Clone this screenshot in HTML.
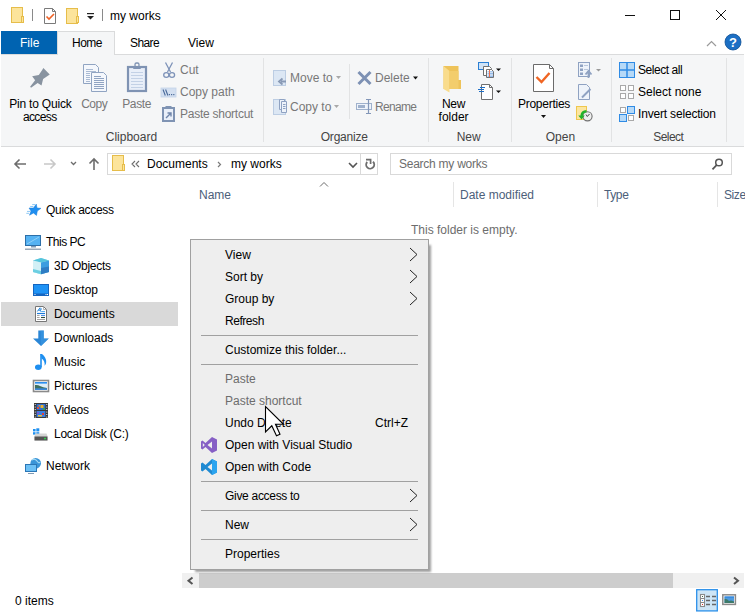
<!DOCTYPE html>
<html><head><meta charset="utf-8">
<style>
html,body{margin:0;padding:0;}
body{width:745px;height:613px;position:relative;overflow:hidden;background:#fff;font-family:"Liberation Sans",sans-serif;font-size:12px;color:#000;}
.a{position:absolute;}
.t{position:absolute;white-space:nowrap;line-height:14px;font-size:12px;}
.g{color:#787878;}
.r{position:absolute;}
svg{position:absolute;overflow:visible;}
</style></head><body>

<!-- ===== Title bar ===== -->
<div class="t" style="left:110px;top:9px;color:#000;">my works</div>

<!-- ===== Ribbon tabs ===== -->
<div class="r" style="left:1px;top:54px;width:743px;height:92px;background:#f5f6f7;border-top:1px solid #dadbdc;border-bottom:1px solid #dadbdc;box-sizing:border-box;height:93px;"></div>
<div class="r" style="left:1px;top:31px;width:56px;height:23px;background:#0063b1;"></div>
<div class="r" style="left:57px;top:31px;width:58px;height:24px;background:#f5f6f7;border:1px solid #dadbdc;border-bottom:none;box-sizing:border-box;"></div>
<div class="t" style="left:20px;top:36px;color:#fff;">File</div>
<div class="t" style="left:72px;top:36px;color:#000;letter-spacing:-0.5px;">Home</div>
<div class="t" style="left:130px;top:36px;color:#000;letter-spacing:-0.6px;">Share</div>
<div class="t" style="left:188px;top:36px;color:#000;">View</div>

<!-- ===== Ribbon content text ===== -->
<div class="t" style="left:-59.65px;top:97px;width:200px;text-align:center;letter-spacing:-0.2px;">Pin to Quick</div>
<div class="t" style="left:-60.25px;top:110px;width:200px;text-align:center;letter-spacing:-0.6px;">access</div>
<div class="t" style="left:-5.849999999999994px;top:97px;width:200px;text-align:center;letter-spacing:-0.5px;color:#787878;">Copy</div>
<div class="t" style="left:36.599999999999994px;top:97px;width:200px;text-align:center;letter-spacing:-0.4px;color:#787878;">Paste</div>
<div class="t g" style="left:180px;top:63px;">Cut</div>
<div class="t g" style="left:180px;top:85px;">Copy path</div>
<div class="t g" style="left:180px;top:107px;letter-spacing:-0.25px;">Paste shortcut</div>
<div class="t" style="left:31.44999999999999px;top:130px;width:200px;text-align:center;color:#444;">Clipboard</div>

<div class="t g" style="left:290px;top:71px;">Move to</div>
<div class="t g" style="left:290px;top:100px;">Copy to</div>
<div class="t g" style="left:375px;top:71px;">Delete</div>
<div class="t g" style="left:375px;top:100px;letter-spacing:-0.7px;">Rename</div>
<div class="t" style="left:244.25px;top:130px;width:200px;text-align:center;color:#444;letter-spacing:-0.2px;">Organize</div>

<div class="t" style="left:353.55px;top:97px;width:200px;text-align:center;letter-spacing:-0.3px;">New</div>
<div class="t" style="left:353.6px;top:110px;width:200px;text-align:center;">folder</div>
<div class="t" style="left:368.7px;top:130px;width:200px;text-align:center;color:#444;">New</div>

<div class="t" style="left:444px;top:97px;width:200px;text-align:center;letter-spacing:-0.25px;">Properties</div>
<div class="t" style="left:460.4px;top:130px;width:200px;text-align:center;color:#444;">Open</div>

<div class="t" style="left:638px;top:63px;letter-spacing:-0.45px;">Select all</div>
<div class="t" style="left:638px;top:85px;">Select none</div>
<div class="t" style="left:638px;top:107px;letter-spacing:-0.18px;">Invert selection</div>
<div class="t" style="left:568.25px;top:130px;width:200px;text-align:center;color:#444;letter-spacing:-0.6px;">Select</div>

<!-- group separators -->
<div class="r" style="left:263px;top:58px;width:1px;height:84px;background:#e2e3e4;"></div>
<div class="r" style="left:349px;top:64px;width:1px;height:55px;background:#e2e3e4;"></div>
<div class="r" style="left:428px;top:58px;width:1px;height:84px;background:#e2e3e4;"></div>
<div class="r" style="left:511px;top:58px;width:1px;height:84px;background:#e2e3e4;"></div>
<div class="r" style="left:611px;top:58px;width:1px;height:84px;background:#e2e3e4;"></div>
<div class="r" style="left:726px;top:58px;width:1px;height:84px;background:#e2e3e4;"></div>

<!-- ===== Address bar ===== -->
<div class="r" style="left:107px;top:153px;width:271px;height:22px;border:1px solid #d9d9d9;box-sizing:border-box;"></div>
<div class="r" style="left:360px;top:153px;width:1px;height:22px;background:#d9d9d9;"></div>
<div class="t" style="left:147px;top:157px;">Documents</div>
<div class="t" style="left:231px;top:157px;">my works</div>
<div class="r" style="left:390px;top:153px;width:342px;height:22px;border:1px solid #d9d9d9;box-sizing:border-box;"></div>
<div class="t" style="left:399px;top:157px;color:#6d6d6d;letter-spacing:-0.25px;">Search my works</div>

<!-- ===== Column headers ===== -->
<div class="t" style="left:199px;top:188px;color:#4c607a;">Name</div>
<div class="r" style="left:453px;top:182px;width:1px;height:25px;background:#e5e5e5;"></div>
<div class="t" style="left:460px;top:188px;color:#4c607a;">Date modified</div>
<div class="r" style="left:597px;top:182px;width:1px;height:25px;background:#e5e5e5;"></div>
<div class="t" style="left:604px;top:188px;color:#4c607a;letter-spacing:-0.4px;">Type</div>
<div class="r" style="left:717px;top:182px;width:1px;height:25px;background:#e5e5e5;"></div>
<div class="t" style="left:724px;top:188px;color:#4c607a;letter-spacing:-0.4px;">Size</div>

<div class="t" style="left:411px;top:223px;color:#6d6d6d;">This folder is empty.</div>

<!-- ===== Nav pane ===== -->
<div class="r" style="left:1px;top:302px;width:177px;height:24px;background:#d9d9d9;"></div>
<div class="t" style="left:46px;top:203px;letter-spacing:-0.3px;">Quick access</div>
<div class="t" style="left:46px;top:235px;letter-spacing:-0.5px;">This PC</div>
<div class="t" style="left:54px;top:259px;letter-spacing:-0.25px;">3D Objects</div>
<div class="t" style="left:54px;top:283px;">Desktop</div>
<div class="t" style="left:54px;top:307px;">Documents</div>
<div class="t" style="left:54px;top:331px;">Downloads</div>
<div class="t" style="left:54px;top:355px;">Music</div>
<div class="t" style="left:54px;top:379px;">Pictures</div>
<div class="t" style="left:54px;top:403px;letter-spacing:-0.3px;">Videos</div>
<div class="t" style="left:54px;top:427px;letter-spacing:-0.28px;">Local Disk (C:)</div>
<div class="t" style="left:46px;top:459px;">Network</div>

<!-- ===== Scrollbar ===== -->
<div class="r" style="left:182px;top:573px;width:562px;height:15px;background:#f0f0f0;"></div>
<div class="r" style="left:199px;top:573px;width:474px;height:15px;background:#cdcdcd;"></div>

<!-- ===== Status bar ===== -->
<div class="t" style="left:15px;top:594px;">0 items</div>


<!-- ===== ICONS (background) ===== -->
<svg style="left:0;top:0" width="745" height="613" viewBox="0 0 745 613">
<!-- title bar -->
<g>
  <rect x="11.5" y="7.5" width="11" height="15" fill="#fce49b" stroke="#e6bd4a"/>
  <rect x="21.5" y="16.5" width="2" height="6" fill="#fce49b" stroke="#e6bd4a"/>
  <rect x="32" y="9" width="1" height="12" fill="#8a8a8a"/>
  <path d="M44.5 8.5 H52.5 L55.5 11.5 V23.5 H44.5 Z" fill="#fff" stroke="#7a7a7a"/>
  <path d="M52.5 8.5 V11.5 H55.5" fill="none" stroke="#7a7a7a"/>
  <path d="M46.5 16.5 L49 19 L54 14" fill="none" stroke="#ef6226" stroke-width="1.6"/>
  <rect x="66.5" y="8.5" width="11" height="15" fill="#fce49b" stroke="#e6bd4a"/>
  <rect x="76.5" y="16.5" width="2" height="6" fill="#fce49b" stroke="#e6bd4a"/>
  <rect x="87" y="13" width="7" height="1.2" fill="#222"/>
  <path d="M87 16 H94 L90.5 19.5 Z" fill="#222"/>
  <rect x="102" y="9" width="1" height="12" fill="#8a8a8a"/>
</g>
<!-- window controls -->
<g fill="none" stroke="#111" stroke-width="1">
  <path d="M625 15.5 H635"/>
  <rect x="670.5" y="10.5" width="9" height="9"/>
  <path d="M716 10 L726 20 M726 10 L716 20"/>
</g>
<!-- collapse + help -->
<path d="M707 46 L711.5 41.5 L716 46" fill="none" stroke="#9a9a9a" stroke-width="1.2"/>
<circle cx="733" cy="42" r="8" fill="#1c6fc4" stroke="#0d4f94" stroke-width="0.8"/>
<text x="733" y="47" font-family="Liberation Sans" font-weight="bold" font-size="13" fill="#fff" text-anchor="middle">?</text>

<!-- ribbon: pin -->
<polygon points="43.35,68.11 49.74,74.5 47.92,75.64 43.12,79.07 41.52,85.46 37.64,82.95 31.02,87.74 30.11,86.83 35.13,80.21 32.16,76.33 38.79,74.96 42.21,69.94" fill="#8893a0"/>
<!-- copy -->
<g stroke="#90a4c2" fill="#f4f7fc" stroke-width="1">
  <path d="M83.5 64.5 H95.5 L98.5 67.5 V83.5 H83.5 Z"/>
  <path d="M91.5 72.5 H103.5 L106.5 75.5 V91.5 H91.5 Z"/>
</g>
<g stroke="#a9bad3" stroke-width="1">
  <path d="M86 69.5 H93 M86 71.5 H96 M86 73.5 H90 M86 75.5 H90 M86 77.5 H90 M86 79.5 H90 M86 81.5 H90"/>
  <path d="M94 76.5 H101 M94 78.5 H104 M94 80.5 H104 M94 82.5 H104 M94 84.5 H104 M94 86.5 H104 M94 88.5 H104" stroke="#8fa3c2"/>
</g>
<!-- paste -->
<rect x="128" y="67" width="18" height="24" fill="#e9eff9" stroke="#7f93b3" stroke-width="2.2"/>
<g stroke="#c3d1e6" stroke-width="1"><path d="M131 72.5 H143 M131 75.5 H143 M131 78.5 H143 M131 81.5 H143 M131 84.5 H143 M131 87.5 H143"/></g>
<path d="M132 66 H142 L140.5 69 H133.5 Z" fill="#7f93b3"/>
<rect x="135" y="63" width="4" height="4" rx="1.5" fill="none" stroke="#7f93b3" stroke-width="1.3"/>
<!-- cut -->
<g fill="none" stroke="#7d92b8" stroke-width="1.3">
  <path d="M165.5 62.5 L170.5 72 M172.5 62.5 L167.5 72"/>
  <ellipse cx="166.3" cy="75" rx="2.6" ry="2.4"/>
  <ellipse cx="172" cy="75" rx="2.6" ry="2.4"/>
</g>
<!-- copy path -->
<rect x="161" y="88" width="15" height="9" fill="#d3dff0" stroke="#c4d3e8" stroke-width="0.8"/>
<path d="M163 89.5 L165.3 95.5 M165.6 89.5 L167.9 95.5" stroke="#4a6a9a" stroke-width="1.1"/>
<g fill="#4a6a9a"><rect x="168.8" y="94" width="1.2" height="1.2"/><rect x="171" y="94" width="1.2" height="1.2"/><rect x="173.2" y="94" width="1.2" height="1.2"/></g>
<!-- paste shortcut -->
<rect x="163" y="108" width="11" height="13" fill="#e9eff9" stroke="#7f93b3" stroke-width="2"/>
<rect x="165.5" y="106" width="6" height="2" fill="#7f93b3"/>
<path d="M166 118 L170.5 113.5 M167.5 113 H171 V116.5" fill="none" stroke="#6f85aa" stroke-width="1.4"/>

<!-- move to -->
<rect x="273.5" y="70.5" width="12" height="15" fill="#dce7f4" stroke="#bccde3"/>
<path d="M286 81.5 H281 M282.5 78.5 L279 81.5 L282.5 84.5" fill="none" stroke="#8899b5" stroke-width="1.8"/>
<!-- copy to -->
<rect x="273.5" y="99.5" width="12" height="15" fill="#dce7f4" stroke="#bccde3"/>
<path d="M279.5 99.5 H284.5 V109.5 H279.5 Z" fill="#eef3fa" stroke="#8fa2c2"/>
<path d="M281.5 101.5 H286.5 V112.5 H281.5 Z" fill="#eef3fa" stroke="#8fa2c2"/>
<path d="M283 104.5 H285.5 M283 106.5 H285.5 M283 108.5 H285.5" stroke="#8fa2c2"/>
<path d="M336 76 H341 L338.5 79 Z" fill="#a8a8a8"/>
<path d="M334 105 H339 L336.5 108 Z" fill="#a8a8a8"/>
<path d="M413 76.5 H418 L415.5 79.5 Z" fill="#111"/>
<!-- delete -->
<path d="M358.5 72 L370.5 84 M370.5 72 L358.5 84" stroke="#7d91b4" stroke-width="3"/>
<!-- rename -->
<rect x="356.5" y="103.5" width="15" height="6" fill="#eef3fa" stroke="#9fb1cc"/>
<rect x="358" y="105" width="7" height="3" fill="#9fb1cc"/>
<path d="M368.5 99 V114 M366 99.5 H371 M366 113.5 H371" stroke="#8296b8" stroke-width="1.2"/>

<!-- new folder -->
<path d="M443.5 66 H458.5 V80 H461 V89 H443.5 Z" fill="#eec35a"/>
<path d="M443.5 66 L449.5 71 V92.5 L443.5 89 Z" fill="#f9dc8c"/>
<path d="M449.5 71 H458.5 V89 H449.5 Z" fill="#f3cd6c"/>
<!-- new item -->
<rect x="478.5" y="62.5" width="10" height="7" fill="#cfe3f7" stroke="#2a7fd4"/>
<path d="M483.5 66.5 H489.5 L491.5 68.5 V75.5 H483.5 Z" fill="#fff" stroke="#707070"/>
<path d="M486.5 69.5 H491.5 L493.5 71.5 V77.5 H486.5 Z" fill="#fff" stroke="#707070"/>
<path d="M487.5 71.8 H493 M487.5 73.4 H493 M487.5 75 H493 M487.5 76.6 H493" stroke="#6aa0e0" stroke-width="0.8"/>
<path d="M489.5 70 V77" stroke="#ef6f4a"/>
<path d="M496 68.5 H501 L498.5 71 Z" fill="#111"/>
<!-- easy access -->
<path d="M481.5 84.5 H489.5 L492.5 87.5 V99.5 H481.5 Z" fill="#fff" stroke="#707070"/>
<path d="M489.5 84.5 V87.5 H492.5" fill="none" stroke="#707070"/>
<path d="M480 87.5 H485 M478 89.5 H484 M479 91.5 H484" stroke="#1e6fc8" stroke-width="1.2"/>
<path d="M496 90.5 H501 L498.5 93 Z" fill="#111"/>

<!-- properties big -->
<path d="M533.5 64.5 H549.5 L553.5 68.5 V91.5 H533.5 Z" fill="#fff" stroke="#6b6b6b"/>
<path d="M549.5 64.5 V68.5 H553.5" fill="none" stroke="#6b6b6b"/>
<path d="M536.5 77 L541.5 82 L549.5 73" fill="none" stroke="#f06523" stroke-width="2.4"/>
<path d="M541 115 H546 L543.5 118 Z" fill="#111"/>
<!-- open -->
<rect x="578.5" y="62.5" width="11" height="14" fill="#eef3fa" stroke="#8fa2c2"/>
<g fill="#8fa2c2"><rect x="580" y="64.5" width="3" height="2.5"/><rect x="580" y="68.5" width="3" height="2.5"/><rect x="580" y="72.5" width="3" height="2.5"/></g>
<path d="M584 65.5 H588 M584 69.5 H588" stroke="#b9c7dc"/>
<path d="M588.5 78 V72 M585.5 74.5 L588.5 71 L591.5 74.5" fill="none" stroke="#8fa2c2" stroke-width="1.8"/>
<path d="M596 69 H601 L598.5 71.5 Z" fill="#9a9a9a"/>
<!-- edit -->
<path d="M578.5 84.5 H586.5 L589.5 87.5 V99.5 H578.5 Z" fill="#eef3fa" stroke="#8fa2c2"/>
<path d="M590.5 89 L582 97.5" stroke="#8fa2c2" stroke-width="2"/>
<!-- history -->
<rect x="576.5" y="106.5" width="10" height="13" fill="#fce6a0" stroke="#efc74e"/>
<circle cx="587.5" cy="116.3" r="4.6" fill="#efefef" stroke="#707070" stroke-width="1.1"/>
<path d="M586 114.5 L587.3 116.5 L589.5 114" fill="none" stroke="#333" stroke-width="0.9"/>
<path d="M586.5 111.3 Q582 111.5 581.5 116" fill="none" stroke="#22b22a" stroke-width="2.4"/>
<path d="M578.3 115.6 H584.8 L581.5 119.5 Z" fill="#22b22a"/>
<!-- select all -->
<rect x="619.5" y="62.5" width="15" height="15" fill="#b6d9f7" stroke="#2f8be5"/>
<path d="M627 62.5 V77.5 M619.5 70 H634.5" stroke="#2f8be5" stroke-width="1.5"/>
<!-- select none -->
<g fill="#fff" stroke="#a9a9a9"><rect x="620.5" y="85.5" width="5" height="5"/><rect x="628.5" y="85.5" width="5" height="5"/><rect x="620.5" y="93.5" width="5" height="5"/><rect x="628.5" y="93.5" width="5" height="5"/></g>
<!-- invert -->
<g fill="#fff" stroke="#a9a9a9"><rect x="620.5" y="107.5" width="5" height="5"/><rect x="628.5" y="115.5" width="5" height="5"/></g>
<g fill="#b6d9f7" stroke="#2f8be5"><rect x="627.5" y="106.5" width="7" height="7"/><rect x="619.5" y="114.5" width="7" height="7"/></g>

<!-- address bar nav -->
<g fill="none" stroke="#6d6d6d" stroke-width="1.6">
  <path d="M26 164 H15 M19.5 159.5 L15 164 L19.5 168.5"/>
  <path d="M44 164 H55 M50.5 159.5 L55 164 L50.5 168.5" stroke="#c8c8c8"/>
  <path d="M71 162 L73.5 164.5 L76 162" stroke-width="1.3"/>
  <path d="M94 170 V159 M89.5 163.5 L94 159 L98.5 163.5"/>
</g>
<rect x="112.5" y="155.5" width="11" height="15" fill="#fce49b" stroke="#e6bd4a"/>
<rect x="122.5" y="164.5" width="2" height="6" fill="#fce49b" stroke="#e6bd4a"/>
<path d="M135 161 L132 164 L135 167 M139 161 L136 164 L139 167" fill="none" stroke="#6d6d6d" stroke-width="1.1"/>
<path d="M218 162 L220.5 164.5 L218 167" fill="none" stroke="#7a7a7a" stroke-width="1.2"/>
<path d="M349 163 L353 167 L357 163" fill="none" stroke="#555" stroke-width="1.6"/>
<path d="M367.2 162 A4 4 0 1 0 373 161.8" fill="none" stroke="#6d6d6d" stroke-width="1.9"/>
<path d="M366 159.6 H370.6 V164" fill="none" stroke="#6d6d6d" stroke-width="1.7"/>
<circle cx="719" cy="162.5" r="3.3" fill="none" stroke="#555" stroke-width="1.5"/>
<path d="M716.8 164.8 L712.5 169.3" stroke="#555" stroke-width="1.7"/>
<!-- sort arrow -->
<path d="M320 186.5 L324 182.5 L328 186.5" fill="none" stroke="#6d6d6d" stroke-width="1"/>

<!-- nav icons -->
<!-- star -->
<path d="M36.3 204.1 L37 208 L41 208.3 L37.3 211 L36.5 215.4 L33.5 213 L29.5 215.2 L31 211 L29 208 L33.5 208 Z" fill="#1f8ef0" stroke="#1b7fd8" stroke-width="0.5"/>
<path d="M32.2 204.6 H35.2 M30.2 206.5 H33.4 M27 211.4 H30 M26.3 213.3 H29" stroke="#8cc8f5" stroke-width="1"/>
<!-- this pc -->
<rect x="25.5" y="235.5" width="15" height="10" fill="#55b2f2" stroke="#2d6fa8"/>
<path d="M27 244 L39 237" stroke="#8fd0f8" stroke-width="1"/>
<rect x="31" y="246" width="5" height="1.5" fill="#7e9ab5"/>
<rect x="25" y="248.5" width="16" height="1.5" fill="#9aa9b8"/>
<!-- 3d objects -->
<path d="M33 260.5 L41 258 L49 260.5 V272 L41 274.3 L33 272 Z" fill="#8fd8e6"/>
<path d="M41 262.5 L49 260.5 V272 L41 274.3 Z" fill="#3b9de0"/>
<path d="M41 268 L49 266.5 V272 L41 274.3 Z" fill="#2a6fb8" opacity="0.7"/>
<path d="M33 260.5 L41 258 L49 260.5 L41 262.5 Z" fill="#55c4dc"/>
<path d="M33 260.5 L41 262.5 V274.3 L33 272 Z" fill="#d2f0f6"/>
<path d="M33 269 L41 271 V274.3 L33 272 Z" fill="#6ccfe2"/>
<!-- desktop -->
<rect x="33.5" y="284.5" width="15" height="11" fill="#1f93f5" stroke="#1465c0"/>
<rect x="34" y="293.5" width="14" height="2" fill="#1465c0"/>
<g fill="#fff"><rect x="34.5" y="294" width="1" height="1"/><rect x="45.5" y="294" width="1" height="1"/><rect x="47" y="294" width="1" height="1"/></g>
<!-- documents -->
<path d="M35.5 306.5 H43.5 L46.5 309.5 V321.5 H35.5 Z" fill="#fff" stroke="#767676"/>
<path d="M43.5 306.5 V309.5 H46.5" fill="none" stroke="#a0a0a0" stroke-width="0.8"/>
<path d="M37.3 311.5 L40 307.8 L40.5 311.5 M38.3 310.2 H40.2" fill="none" stroke="#2a8ae0" stroke-width="1"/>
<path d="M41 309 H42" stroke="#2a8ae0"/>
<path d="M41.2 311.5 H45" stroke="#5aaef0" stroke-width="1"/>
<path d="M37 313.5 H45" stroke="#1e7ad8" stroke-width="1.2"/>
<path d="M37 315.5 H39.6 M37 317.5 H39.6 M37 319.5 H45" stroke="#9a9a9a" stroke-width="0.9"/>
<path d="M41 315.5 H45" stroke="#4a90e8" stroke-width="1"/>
<path d="M41 317.5 H45" stroke="#2e4a3a" stroke-width="1.1"/>
<!-- downloads -->
<path d="M38.3 330.5 H43.8 V338.5 H48.8 L41 346 L33 338.5 H38.3 Z" fill="#2a86d6"/>
<path d="M40.5 330.5 H43.8 V338.5 H48.8 L41 346 Z" fill="#3e9be6" opacity="0.5"/>
<!-- music -->
<ellipse cx="38.3" cy="367.3" rx="3.3" ry="2.7" fill="#1e8ff0"/>
<path d="M41 354 V367" stroke="#1e8ff0" stroke-width="1.6"/>
<path d="M40.5 354 L42 354 Q46.3 357.5 46.2 362 Q46.2 364.5 44.6 365.8 Q45.2 361 41.5 358.6 Z" fill="#1e8ff0"/>
<!-- pictures -->
<rect x="33.5" y="380.5" width="15" height="11" fill="#fff" stroke="#8a8a8a" stroke-width="1.6"/>
<rect x="35" y="382" width="12" height="8" fill="#dcedf9"/>
<rect x="35" y="382" width="12" height="1.6" fill="#2a8ef0"/>
<path d="M35 385 Q38 384.5 40 386 Q43 387.5 47 388 V389 H35 Z" fill="#3f7060"/>
<rect x="35" y="388.3" width="12" height="1.7" fill="#3b86d6"/>
<!-- videos -->
<rect x="34" y="403" width="14" height="15" fill="#3a3a3a"/>
<rect x="36.6" y="404" width="8.8" height="6" fill="#2d6fd0"/>
<rect x="36.6" y="411" width="8.8" height="6" fill="#3a7fe0"/>
<rect x="40.5" y="405" width="3" height="3" fill="#e8b030"/>
<rect x="37" y="407" width="2" height="2" fill="#e0503a"/>
<rect x="43" y="408" width="2" height="2" fill="#3aa050"/>
<rect x="38.5" y="405" width="1.5" height="1.5" fill="#f08a30"/>
<rect x="42" y="413" width="2" height="2" fill="#e04040"/>
<rect x="38" y="415" width="4" height="1.5" fill="#f0c030"/>
<rect x="37" y="412" width="2" height="2" fill="#7a5ad0"/>
<g fill="#fff"><circle cx="35.2" cy="404.5" r="0.6"/><circle cx="35.2" cy="407" r="0.6"/><circle cx="35.2" cy="409.5" r="0.6"/><circle cx="35.2" cy="412" r="0.6"/><circle cx="35.2" cy="414.5" r="0.6"/><circle cx="35.2" cy="417" r="0.6"/>
<circle cx="46.8" cy="404.5" r="0.6"/><circle cx="46.8" cy="407" r="0.6"/><circle cx="46.8" cy="409.5" r="0.6"/><circle cx="46.8" cy="412" r="0.6"/><circle cx="46.8" cy="414.5" r="0.6"/><circle cx="46.8" cy="417" r="0.6"/></g>
<!-- local disk -->
<g fill="#1e90f0"><rect x="33" y="429" width="2.6" height="2.4"/><rect x="36.3" y="428.3" width="3" height="3.1"/><rect x="33" y="432.2" width="2.6" height="2.4"/><rect x="36.3" y="432.2" width="3" height="3.1"/></g>
<path d="M35.5 433.5 H46.5 L47.5 436 V440.5 H34.5 V436 Z" fill="#d4d4d4"/>
<rect x="34.5" y="436.5" width="13" height="4" fill="#555"/>
<rect x="44" y="437.8" width="2" height="1.5" fill="#2fd04a"/>
<!-- network -->
<circle cx="35.7" cy="463.2" r="5.3" fill="#3a95d8"/>
<path d="M32 460 Q35 458 37 461 T40 462" fill="none" stroke="#a6dbf5" stroke-width="1.2"/>
<rect x="25.5" y="464.5" width="11" height="7" fill="#6cc0f5" stroke="#2b76b6"/>
<rect x="28" y="473" width="6" height="1" fill="#7e9ab5"/>

<!-- scroll arrows -->
<path d="M192.5 577.5 L188.5 580.7 L192.5 584" fill="none" stroke="#555" stroke-width="2"/>
<path d="M734 577.5 L738 580.7 L734 584" fill="none" stroke="#555" stroke-width="2"/>
<!-- view buttons -->
<rect x="696.7" y="589.7" width="20.6" height="21.2" fill="#cde5f6" stroke="#2b90ea" stroke-width="1.3"/>
<rect x="700.5" y="594.5" width="4" height="12" fill="#fff" stroke="#8a8a8a" stroke-width="1.1"/>
<path d="M700.5 598.5 H704.5 M700.5 602.5 H704.5" stroke="#8a8a8a" stroke-width="1.1"/>
<rect x="702" y="596" width="1" height="1" fill="#3a6a4a"/>
<rect x="702" y="600" width="1" height="1" fill="#3a8ae8"/>
<rect x="702" y="604" width="1" height="1" fill="#d83030"/>
<path d="M706 596.5 H710 M712 596.5 H716 M706 600.5 H710 M712 600.5 H716 M706 604.5 H710 M712 604.5 H716" stroke="#666" stroke-width="1.3"/>
<rect x="722.8" y="594.8" width="12.6" height="9.6" fill="#fff" stroke="#8a8a8a" stroke-width="1.5"/>
<rect x="724.5" y="596.5" width="9.5" height="6.5" fill="#4f9be0"/>
<path d="M724.5 598.5 Q728 599 729 601 Q731 600 734 601.5 V603 H724.5 Z" fill="#3d7a6a"/>
<rect x="724.5" y="596.5" width="9.5" height="1.2" fill="#2f86e0"/>
</svg>

<!-- ===== Context menu ===== -->
<div class="r" style="left:195px;top:245px;width:236px;height:327px;background:rgba(0,0,0,0.38);filter:blur(1.3px);"></div>
<div class="r" style="left:190px;top:239px;width:239px;height:331px;background:#eeeeee;border:1px solid #a0a0a0;box-sizing:border-box;"></div>
<div class="t" style="left:225px;top:248px;">View</div>
<div class="t" style="left:225px;top:270px;">Sort by</div>
<div class="t" style="left:225px;top:292px;">Group by</div>
<div class="t" style="left:225px;top:314px;letter-spacing:-0.45px;">Refresh</div>
<div class="r" style="left:201px;top:335px;width:217px;height:1px;background:#a0a0a0;"></div>
<div class="t" style="left:225px;top:343px;">Customize this folder...</div>
<div class="r" style="left:201px;top:364px;width:217px;height:1px;background:#a0a0a0;"></div>
<div class="t" style="left:225px;top:372px;color:#6d6d6d;">Paste</div>
<div class="t" style="left:225px;top:394px;color:#6d6d6d;">Paste shortcut</div>
<div class="t" style="left:225px;top:416px;">Undo Delete</div>
<div class="t" style="left:375px;top:416px;">Ctrl+Z</div>
<div class="t" style="left:225px;top:438px;">Open with Visual Studio</div>
<div class="t" style="left:225px;top:460px;">Open with Code</div>
<div class="r" style="left:201px;top:481px;width:217px;height:1px;background:#a0a0a0;"></div>
<div class="t" style="left:225px;top:489px;letter-spacing:-0.3px;">Give access to</div>
<div class="r" style="left:201px;top:510px;width:217px;height:1px;background:#a0a0a0;"></div>
<div class="t" style="left:225px;top:518px;">New</div>
<div class="r" style="left:201px;top:539px;width:217px;height:1px;background:#a0a0a0;"></div>
<div class="t" style="left:225px;top:547px;">Properties</div>


<svg style="left:0;top:0" width="745" height="613" viewBox="0 0 745 613">
<g fill="none" stroke="#222" stroke-width="1">
  <path d="M410 248 L417 254.5 L410 261"/>
  <path d="M410 270 L417 276.5 L410 283"/>
  <path d="M410 292 L417 298.5 L410 305"/>
  <path d="M410 489 L417 495.5 L410 502"/>
  <path d="M410 518 L417 524.5 L410 531"/>
</g>
<!-- VS -->
<path d="M212 437 L217 439.5 V450.5 L212 453 L205.5 447 L202.5 449.5 L201 448.5 V441.5 L202.5 440.5 L205.5 443 Z M212 441.5 L207.5 445 L212 448.5 Z M202.8 443 V447 L204.8 445 Z" fill="#865fc5" fill-rule="evenodd"/>
<!-- VS code -->
<path d="M212 459 L217 461.5 V472.5 L212 475 L205.5 469 L202.5 471.5 L201 470.5 V463.5 L202.5 462.5 L205.5 465 Z M212 463.5 L207.5 467 L212 470.5 Z" fill="#1f8ad2" fill-rule="evenodd"/>
<path d="M212 459 L217 461.5 V472.5 L212 475 Z" fill="#2ba4ef"/>
<!-- cursor -->
<path d="M265.5 406.5 V432 L271.8 425.8 L276.5 435.8 L280 434.2 L275.5 424.3 L283.5 424.3 Z" fill="#fff" stroke="#000" stroke-width="1.1" stroke-linejoin="miter"/>
</svg>

</body></html>
